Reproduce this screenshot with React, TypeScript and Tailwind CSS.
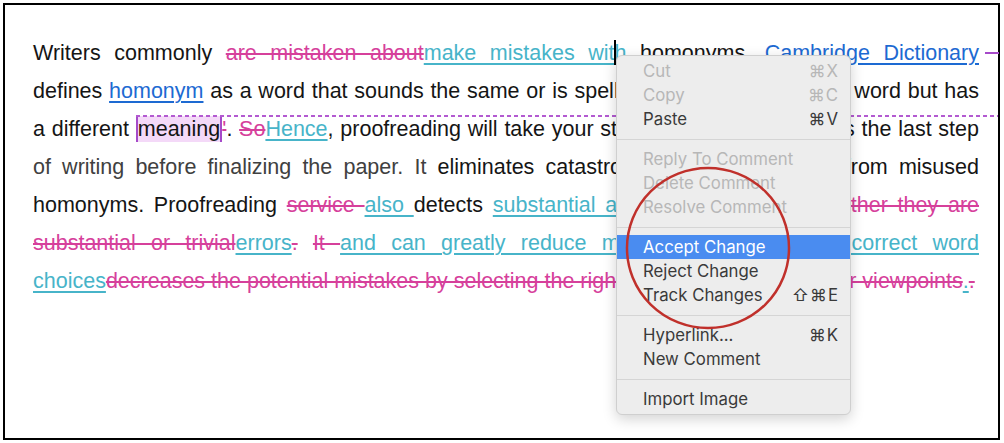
import type { ReactNode } from 'react'

const delCls = 'text-[#d6409b] line-through decoration-[#d6409b] decoration-[1.5px]'
const insCls =
  'text-[#47b4c9] underline decoration-[#47b4c9] decoration-[1.5px] underline-offset-[3px]'
const linkCls =
  'text-[#1d6ad2] underline decoration-[#1d6ad2] decoration-[1.5px] underline-offset-[3px]'

function D({ children }: { children: ReactNode }) {
  return <span className={delCls}>{children}</span>
}

function I({ children }: { children: ReactNode }) {
  return <span className={insCls}>{children}</span>
}

function L({ children }: { children: ReactNode }) {
  return <span className={linkCls}>{children}</span>
}

function Line({ children, last = false }: { children: ReactNode; last?: boolean }) {
  return (
    <div className={last ? 'whitespace-nowrap' : 'text-justify [text-align-last:justify]'}>
      {children}
    </div>
  )
}

type Item = { label: string; key?: string; disabled?: boolean; active?: boolean }

const groups: Item[][] = [
  [
    { label: 'Cut', key: '⌘X', disabled: true },
    { label: 'Copy', key: '⌘C', disabled: true },
    { label: 'Paste', key: '⌘V' },
  ],
  [
    { label: 'Reply To Comment', disabled: true },
    { label: 'Delete Comment', disabled: true },
    { label: 'Resolve Comment', disabled: true },
  ],
  [
    { label: 'Accept Change', active: true },
    { label: 'Reject Change' },
    { label: 'Track Changes', key: '⇧⌘E' },
  ],
  [
    { label: 'Hyperlink...', key: '⌘K' },
    { label: 'New Comment' },
  ],
  [{ label: 'Import Image' }],
]

function ContextMenu() {
  return (
    <div className="absolute left-[611px] top-[50px] w-[235px] rounded-[6px] border border-[#cfcfcf] bg-[#ededed] py-[3px] font-['Inter','Noto_Sans','DejaVu_Sans',sans-serif] text-[16.8px] shadow-[0_4px_14px_rgba(0,0,0,0.18)]">
      {groups.map((group, gi) => (
        <div key={gi}>
          {gi > 0 && (
            <div className="flex h-[16px] items-center">
              <div className="h-px w-full bg-[#d5d5d5]" />
            </div>
          )}
          {group.map((item) => (
            <div
              key={item.label}
              className={
                'flex h-[24px] items-center justify-between pl-[26px] pr-[11px] ' +
                (item.active
                  ? 'bg-[#4a8cf0] text-white'
                  : item.disabled
                    ? 'text-[#b7b7b7]'
                    : 'text-[#3a3a3a]')
              }
            >
              <span>{item.label}</span>
              {item.key && <span className="tracking-[1px]">{item.key}</span>}
            </div>
          ))}
        </div>
      ))}
    </div>
  )
}

export default function App() {
  return (
    <div className="h-[443px] w-[1004px] bg-white pb-[3px] pl-[3px] pr-[4px] pt-[3px]">
      <div className="relative h-full border-2 border-black pl-[28px] pr-[19px] pt-[29px] font-['Liberation_Sans',Arial,sans-serif] text-[21.5px] leading-[38px] text-[#151515]">
        <Line>
          Writers commonly <D>are mistaken about</D>
          <I>make mistakes wit</I>
          <span className="relative inline-block w-0">
            <span className="absolute left-[-1px] top-[-20px] h-[25px] w-[2px] bg-black" />
          </span>
          <I>h</I> homonyms. <L>Cambridge Dictionary</L>
        </Line>
        <Line>
          defines <L>homonym</L> as a word that sounds the same or is spelled the same as another
          word but has
        </Line>
        <Line>
          a different{' '}
          <span className="border-x-2 border-[#a64ac9] bg-[#f4d9f8] py-[1px]">meaning</span>
          <D>'</D>. <D>So</D>
          <I>Hence</I>, proofreading will take your story to a higher level. It is the last step
        </Line>
        <Line>
          <span className="text-[#404040]">of writing before finalizing the paper. It</span>{' '}
          eliminates catastrophic errors that arise from misused
        </Line>
        <Line>
          homonyms. Proofreading <D>service </D>
          <I>also </I>detects <I>substantial and trivial mistakes,</I> <D>whether they are</D>
        </Line>
        <Line>
          <D>substantial or trivial</D>
          <I>errors</I>
          <D>.</D> <D>It </D>
          <I>and can greatly reduce mistakes by using the correct word</I>
        </Line>
        <Line last>
          <I>choices</I>
          <D>decreases the potential mistakes by selecting the right words that express your viewpoints</D>
          <I>.</I>
          <D>.</D>
        </Line>

        {/* comment anchor lines */}
        <div className="absolute left-[980px] top-[47px] h-[1.5px] w-[14px] bg-[#a64ac9]" />
        <div className="absolute left-[131px] right-0 top-[110px] h-[1.5px] bg-[repeating-linear-gradient(90deg,#b35ad1_0_4px,transparent_4px_7px)]" />

        <ContextMenu />

        <svg
          className="pointer-events-none absolute left-[618px] top-[158px]"
          width="170"
          height="170"
          viewBox="0 0 170 170"
        >
          <ellipse cx="85" cy="85" rx="81" ry="80" fill="none" stroke="#c0302b" strokeWidth="2.5" />
        </svg>
      </div>
    </div>
  )
}
